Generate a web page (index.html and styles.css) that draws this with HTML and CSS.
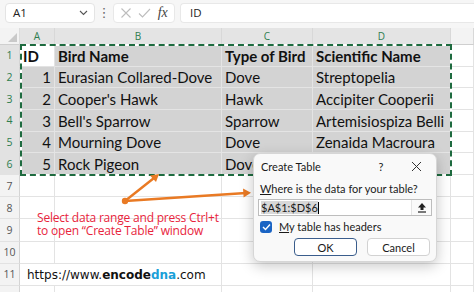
FILE: index.html
```html
<!DOCTYPE html>
<html>
<head>
<meta charset="utf-8">
<link rel="stylesheet" href="styles.css">
</head>
<body>
<div class="app">
  <div class="fbar">
    <div class="namebox"><span>A1</span>
      <svg class="chev" width="9" height="6" viewBox="0 0 9 6"><path d="M1 1 L4.5 4.5 L8 1" fill="none" stroke="#555" stroke-width="1.1"/></svg>
    </div>
    <div class="dots">⋮</div>
    <div class="fxbox">
      <svg width="12" height="12" viewBox="0 0 12 12"><path d="M1.5 1.5 L10.5 10.5 M10.5 1.5 L1.5 10.5" stroke="#bdbdbd" stroke-width="1.1"/></svg>
      <svg width="13" height="12" viewBox="0 0 13 12"><path d="M1 6.5 L4.5 10 L12 2" fill="none" stroke="#bdbdbd" stroke-width="1.1"/></svg>
      <span class="fx">fx</span>
    </div>
    <div class="finput">ID</div>
  </div>

  <div class="sheet">
    <div class="corner"><svg width="9" height="9" viewBox="0 0 9 9"><path d="M9 0 L9 9 L0 9 Z" fill="#c9c9c9"/></svg></div>
    <div class="ch sel">A</div><div class="ch sel">B</div><div class="ch sel">C</div><div class="ch sel">D</div><div class="ch"></div>

    <div class="rh sel">1</div><div class="c act b">ID</div><div class="c g b">Bird Name</div><div class="c g b">Type of Bird</div><div class="c g b">Scientific Name</div><div class="c"></div>
    <div class="rh sel">2</div><div class="c g r">1</div><div class="c g">Eurasian Collared-Dove</div><div class="c g">Dove</div><div class="c g">Streptopelia</div><div class="c"></div>
    <div class="rh sel">3</div><div class="c g r">2</div><div class="c g">Cooper's Hawk</div><div class="c g">Hawk</div><div class="c g">Accipiter Cooperii</div><div class="c"></div>
    <div class="rh sel">4</div><div class="c g r">3</div><div class="c g">Bell's Sparrow</div><div class="c g">Sparrow</div><div class="c g">Artemisiospiza Belli</div><div class="c"></div>
    <div class="rh sel">5</div><div class="c g r">4</div><div class="c g">Mourning Dove</div><div class="c g">Dove</div><div class="c g">Zenaida Macroura</div><div class="c"></div>
    <div class="rh sel">6</div><div class="c g r">5</div><div class="c g">Rock Pigeon</div><div class="c g">Dove</div><div class="c g"></div><div class="c"></div>
    <div class="rh">7</div><div class="c"></div><div class="c"></div><div class="c"></div><div class="c"></div><div class="c"></div>
    <div class="rh">8</div><div class="c"></div><div class="c"></div><div class="c"></div><div class="c"></div><div class="c"></div>
    <div class="rh">9</div><div class="c"></div><div class="c"></div><div class="c"></div><div class="c"></div><div class="c"></div>
    <div class="rh">10</div><div class="c"></div><div class="c"></div><div class="c"></div><div class="c"></div><div class="c"></div>
    <div class="rh">11</div><div class="c url">https://www.<b>encode</b><b class="dna">dna</b>.com</div><div class="c"></div><div class="c"></div><div class="c"></div>
    <div class="rh"></div><div class="c"></div><div class="c"></div><div class="c"></div><div class="c"></div><div class="c"></div>
  </div>

  <div class="marquee"><div class="ants"></div></div>

  <svg class="arrows" width="474" height="292" viewBox="0 0 474 292">
    <g stroke="#e97a24" stroke-width="2.4" fill="none" stroke-linecap="round">
      <path d="M125 201 L154 178"/>
      <path d="M125 201 L246 193"/>
    </g>
    <g fill="#e97a24">
      <circle cx="125" cy="201" r="3.2"/>
      <path d="M159 174 L150 175.5 L156 182 Z"/>
      <path d="M251 192.7 L243 188.6 L243.6 197.4 Z"/>
    </g>
  </svg>

  <div class="note">Select data range and press Ctrl+t<br>to open “Create Table” window</div>

  <div class="dialog">
    <div class="dtitle"><span class="dt">Create Table</span><span class="q">?</span>
      <svg class="x" width="11" height="11" viewBox="0 0 11 11"><path d="M1 1 L10 10 M10 1 L1 10" stroke="#333" stroke-width="1"/></svg>
    </div>
    <div class="dbody">
      <div class="lbl"><u>W</u>here is the data for your table?</div>
      <div class="rng"><span class="rtxt"><span class="hl">$A$1:$D$6</span><span class="caret"></span></span>
        <span class="up"><svg width="10" height="11" viewBox="0 0 10 11"><path d="M5 1 L9 5.5 L6.5 5.5 L6.5 8 L3.5 8 L3.5 5.5 L1 5.5 Z" fill="#222"/><path d="M1 10 L9 10" stroke="#222" stroke-width="1.2"/></svg></span>
      </div>
      <div class="chk"><span class="box"><svg width="9" height="8" viewBox="0 0 9 8"><path d="M1 4 L3.5 6.5 L8 1.5" fill="none" stroke="#fff" stroke-width="1.4"/></svg></span><span><u>M</u>y table has headers</span></div>
      <div class="btns"><div class="btn ok">OK</div><div class="btn">Cancel</div></div>
    </div>
  </div>
</div>
</body>
</html>
```

FILE: styles.css
```css
* { box-sizing: border-box; }
html, body { margin: 0; padding: 0; background: #fff; }
.app { position: relative; width: 474px; height: 292px; overflow: hidden; font-family: "Lato", "Open Sans", sans-serif; }

.fbar { height: 28px; background: #f6f6f6; display: flex; align-items: center; padding: 0 0 3px 5px; gap: 0; }
.namebox { width: 90px; height: 20px; background: #fff; border: 1px solid #e4e4e4; border-radius: 4px; display: flex; align-items: center; justify-content: space-between; padding: 0 6px 0 7px; font-family: "Open Sans", sans-serif; font-size: 11.5px; color: #222; }
.dots { width: 18px; text-align: center; color: #666; font-size: 13px; font-family: "DejaVu Sans", sans-serif; }
.fxbox { width: 62px; height: 20px; background: #fff; border: 1px solid #e8e8e8; border-radius: 4px; display: flex; align-items: center; justify-content: space-around; padding: 0 3px; }
.fx { font-family: "Liberation Serif", serif; font-style: italic; font-size: 14px; color: #444; }
.finput { flex: 1; height: 20px; margin-left: 5px; background: #fff; border: 1px solid #e8e8e8; border-right: none; border-radius: 4px 0 0 4px; font-family: "Open Sans", sans-serif; font-size: 11.5px; color: #222; display: flex; align-items: center; padding-left: 9px; }

.sheet { display: grid; grid-template-columns: 20px 35px 167px 91px 138px 1fr; grid-template-rows: 17px repeat(6, 21.67px) repeat(5, 22.2px) 20px; }
.corner { background: #f3f3f3; border-right: 1px solid #dcdcdc; border-bottom: 1px solid #cfcfcf; display: flex; align-items: flex-end; justify-content: flex-end; padding: 0 2px 2px 0; }
.ch { background: #f3f3f3; border-right: 1px solid #d8d8d8; border-bottom: 1px solid #cfcfcf; font-family: "Open Sans", sans-serif; font-size: 10px; color: #666; display: flex; align-items: center; justify-content: center; }
.ch.sel { background: #e4e4e4; color: #2e7d4f; }
.rh { background: #f3f3f3; border-right: 1px solid #d4d4d4; border-bottom: 1px solid #e2e2e2; font-family: "Open Sans", sans-serif; font-size: 10.5px; color: #555; display: flex; align-items: center; justify-content: center; }
.rh.sel { background: #e2e2e2; color: #2e7d4f; }
.c { border-right: 1px solid #e3e3e3; border-bottom: 1px solid #e3e3e3; font-size: 15px; color: #111; display: flex; align-items: center; padding: 1px 3px 0 3px; white-space: nowrap; }
.c.g { background: #d3d3d3; border-color: #e4e4e4; }
.c.act { background: #fff; }
.c.b { font-weight: bold; }
.c.r { justify-content: flex-end; }
.c.url { grid-column: span 2; font-family: "DejaVu Sans", sans-serif; font-size: 12px; padding-left: 7px; border-right: 1px solid #e3e3e3; }
.url b { font-weight: bold; }
.url .dna { color: #1aa0d8; }

.marquee { position: absolute; left: 20px; top: 44px; width: 432px; height: 132px; border: 2px solid #fff; }
.ants { position: absolute; inset: -2px; border: 2px dashed #1e6b3f; }

.arrows { position: absolute; left: 0; top: 0; pointer-events: none; }

.note { position: absolute; left: 37px; top: 211px; font-family: "Open Sans", sans-serif; font-size: 12px; letter-spacing: -0.2px; line-height: 13px; color: #e8243c; white-space: nowrap; }

.dialog { position: absolute; left: 253px; top: 153px; width: 184px; height: 109px; background: #f9f9f9; border: 1px solid #d6d6d6; border-radius: 7px; box-shadow: 0 4px 14px rgba(0,0,0,0.22); font-family: "Lato", sans-serif; font-size: 11px; color: #1a1a1a; }
.dtitle { height: 24px; display: flex; align-items: center; padding: 0 0 0 7px; }
.dt { font-size: 11px; }
.q { width: 12px; font-size: 11px; margin-left: auto; margin-right: 24px; text-align: center; }
.x { margin-right: 14px; }
.dbody { padding: 4px 4px 0 4px; display: flex; flex-direction: column; }
.lbl { padding-left: 2px; height: 14px; line-height: 14px; }
.rng { margin-top: 3px; height: 17px; background: #fff; border: 1px solid #bdbdbd; display: flex; align-items: center; justify-content: space-between; }
.rtxt { display: flex; align-items: center; padding-left: 2px; }
.hl { background: #d8d8d8; font-size: 11px; line-height: 13px; }
.caret { width: 1px; height: 12px; background: #000; }
.up { width: 20px; height: 15px; display: flex; align-items: center; justify-content: center; border-left: 1px solid #e4e4e4; background: #fafafa; }
.chk { margin-top: 4px; display: flex; align-items: center; gap: 7px; padding-left: 2px; height: 13px; }
.box { width: 12px; height: 12px; border-radius: 3px; background: #1a64c4; display: flex; align-items: center; justify-content: center; }
.btns { margin-top: 5px; display: flex; justify-content: flex-end; gap: 10px; padding-right: 2px; }
.btn { width: 63px; height: 18px; background: #fff; border: 1px solid #d2d2d2; border-radius: 4px; display: flex; align-items: center; justify-content: center; }
.btn.ok { border: 1.5px solid #3a5d8c; }
```
